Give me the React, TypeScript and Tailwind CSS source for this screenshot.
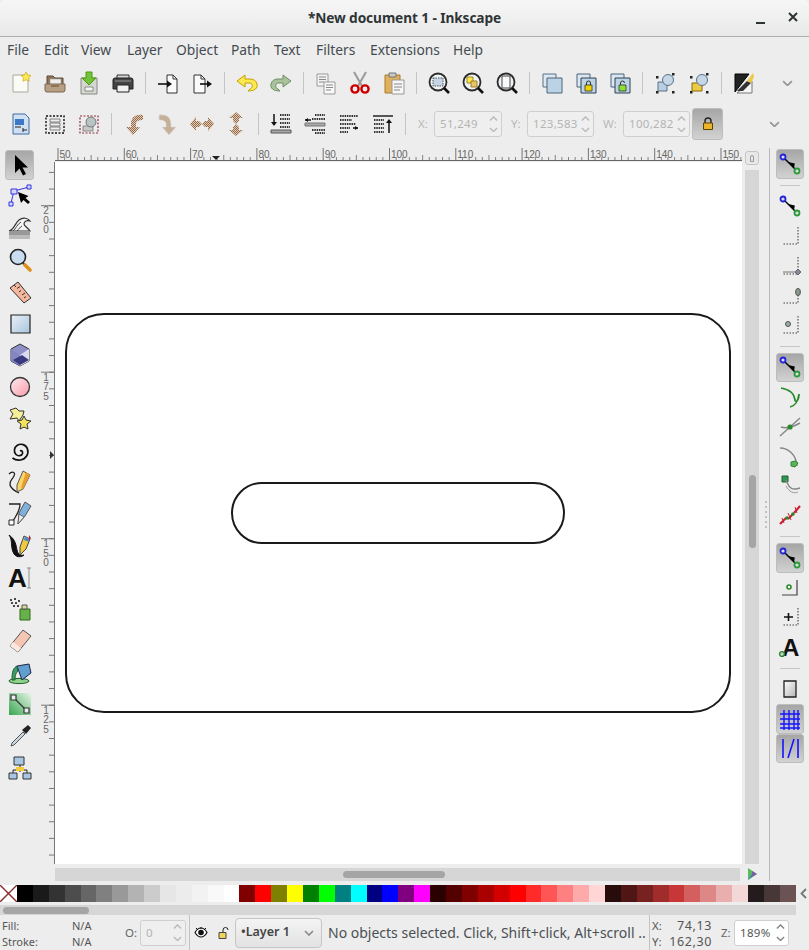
import React from "react";

const Ico = ({ children }: { children: React.ReactNode }) => (
  <svg width="24" height="24" viewBox="0 0 24 24" fill="none" className="shrink-0 overflow-visible">
    {children}
  </svg>
);

const Chevron = ({ up = false, size = 10, color = "#9a9a9a" }: { up?: boolean; size?: number; color?: string }) => (
  <svg width={size} height={size * 0.6} viewBox="0 0 10 6" fill="none">
    <path d={up ? "M1 5l4-4 4 4" : "M1 1l4 4 4-4"} stroke={color} strokeWidth="1.6" />
  </svg>
);

// top toolbar
const iNew = (
  <Ico>
    <path d="M4 4h15v17H4z" fill="#fbfbf6" stroke="#a9a9a0" />
    <path d="M17 1l1.600 3 3.400.5-2.400 2.400.6 3.400-3.200-1.600-3 1.600.5-3.400L12 4.500l3.400-.5z" fill="#fce94f" stroke="#c4a000" strokeWidth=".6" />
  </Ico>
);
const iOpen = (
  <Ico>
    <path d="M4 5h6l2 2h8v7H4z" fill="#8f7458" stroke="#5c4a35" />
    <path d="M7 8h11v6H7z" fill="#eeeeec" stroke="#999" strokeWidth=".6" />
    <path d="M2 13h20v6a2 2 0 01-2 2H4a2 2 0 01-2-2z" fill="#b79f84" stroke="#7b6750" />
    <path d="M8 14h8v2H8z" fill="#8f7458" />
  </Ico>
);
const iSave = (
  <Ico>
    <path d="M4 7h16v16H4z" fill="#d3d7cf" stroke="#888a85" />
    <path d="M8 16h8v4H8z" fill="#f4f4f2" stroke="#666" strokeWidth=".7" />
    <path d="M9 1h6v6h4l-7 7-7-7h4z" fill="#73c23f" stroke="#4e9a06" />
  </Ico>
);
const iPrint = (
  <Ico>
    <path d="M6 4h12v5H6z" fill="#d5d5d5" stroke="#333" />
    <path d="M2 9a2 2 0 012-2h16a2 2 0 012 2v9H2z" fill="#444" stroke="#222" />
    <path d="M6 14h12v7H6z" fill="#f2f2f2" stroke="#222" />
    <path d="M4 10h16" stroke="#999" />
  </Ico>
);
const iImport = (
  <Ico>
    <path d="M11 4h6l4 4v14H11z" fill="#fafafa" stroke="#333" />
    <path d="M17 4v4h4" stroke="#333" />
    <path d="M2 13h10" stroke="#111" strokeWidth="1.600" />
    <path d="M11 9.500l5 3.500-5 3.500z" fill="#111" />
  </Ico>
);
const iExport = (
  <Ico>
    <path d="M4 4h7l4 4v14H4z" fill="#fafafa" stroke="#333" />
    <path d="M11 4v4h4" stroke="#333" />
    <path d="M10 13h8" stroke="#111" strokeWidth="1.600" />
    <path d="M17 9.500l5 3.500-5 3.500z" fill="#111" />
  </Ico>
);
const iUndo = (
  <Ico>
    <path d="M10 4L2 10l8 6v-4h5c3 0 3 5 0 6l-2 2c7 0 10-3 9-7-.6-3-3-5-7-5h-5z" fill="#fce94f" stroke="#c4a000" />
  </Ico>
);
const iRedo = (
  <Ico>
    <path d="M14 4l8 6-8 6v-4H9c-3 0-3 5 0 6l2 2c-7 0-10-3-9-7 .6-3 3-5 7-5h5z" fill="#a9c29b" stroke="#6f8f62" />
  </Ico>
);
const iCopy = (
  <Ico>
    <path d="M3 3h11v12H3z" fill="#f3f3f3" stroke="#9a9a9a" />
    <path d="M5 6h7M5 8.500h7M5 11h5" stroke="#888" />
    <path d="M10 11h11v12H10z" fill="#f8f8f8" stroke="#9a9a9a" />
    <path d="M12 14h7M12 16.500h7M12 19h5" stroke="#888" />
  </Ico>
);
const iCut = (
  <Ico>
    <path d="M6 1l8 14M18 1l-8 14" stroke="#9a9a9a" strokeWidth="2" />
    <circle cx="7" cy="18" r="3.600" stroke="#cc0000" strokeWidth="2.400" />
    <circle cx="17" cy="18" r="3.600" stroke="#cc0000" strokeWidth="2.400" />
  </Ico>
);
const iPaste = (
  <Ico>
    <path d="M3 4h15v18H3z" fill="#dfb05e" stroke="#a67c2d" />
    <path d="M7 2h7v4H7z" fill="#c9c9c9" stroke="#777" />
    <path d="M10 9h12v14H10z" fill="#f6f6f6" stroke="#999" />
    <path d="M12 13h8M12 16h8M12 19h6" stroke="#888" />
  </Ico>
);
const Lens = ({ children }: { children?: React.ReactNode }) => (
  <Ico>
    <circle cx="11" cy="11" r="8.500" fill="#eef3f7" stroke="#2b2b2b" strokeWidth="1.800" />
    {children}
    <path d="M17 17l5 5" stroke="#111" strokeWidth="2.600" />
  </Ico>
);
const iZoomDraw = (
  <Lens>
    <path d="M6 7h10v8H6z" fill="#c5d5e6" stroke="#555" strokeDasharray="1.500 1" />
  </Lens>
);
const iZoomSel = (
  <Lens>
    <path d="M6 6h6v6H6z" fill="#fce94f" stroke="#8a6d00" strokeWidth=".8" />
    <path d="M10 10h6v6h-6z" fill="#e9c46a" stroke="#8a6d00" strokeWidth=".8" />
  </Lens>
);
const iZoomPage = (
  <Lens>
    <path d="M7 5h8v12H7z" fill="#fafafa" stroke="#444" />
  </Lens>
);
const iDup = (
  <Ico>
    <path d="M3 3h13v13H3z" fill="#dbe7f1" stroke="#5a7186" />
    <path d="M7 7h15v15H7z" fill="#bcd3e6" stroke="#4d6579" />
  </Ico>
);
const iClone = (
  <Ico>
    <path d="M3 3h13v13H3z" fill="#dbe7f1" stroke="#4d6579" />
    <path d="M7 7h15v15H7z" fill="#bcd3e6" stroke="#2f4050" />
    <path d="M11 14h7v6h-7z" fill="#edd400" stroke="#333" strokeWidth=".8" />
    <path d="M12.500 14v-2a2 2 0 014 0v2" stroke="#333" />
  </Ico>
);
const iUnlink = (
  <Ico>
    <path d="M3 3h13v13H3z" fill="#dbe7f1" stroke="#4d6579" />
    <path d="M7 7h15v15H7z" fill="#bcd3e6" stroke="#2f4050" />
    <path d="M11 14h7v6h-7z" fill="#8ae234" stroke="#333" strokeWidth=".8" />
    <path d="M12.500 14v-2a2 2 0 014 0" stroke="#333" />
  </Ico>
);
const Corners = () => (
  <path d="M3 5h2.500v2.500H3zM19 2h2.500v2.500H19zM3 20h2.500v2.500H3zM19 20h2.500v2.500H19z" fill="#222" />
);
const iGroup = (
  <Ico>
    <Corners />
    <path d="M5 11h9v9H5z" fill="#b7cfe3" stroke="#5a7186" />
    <circle cx="15" cy="9" r="5.500" fill="#c5d7e6" stroke="#5a7186" />
  </Ico>
);
const iUngroup = (
  <Ico>
    <Corners />
    <path d="M5 12h10v8H5z" fill="#edc948" stroke="#8a6d00" />
    <circle cx="15" cy="9" r="5.500" fill="#c5d7e6" stroke="#5a7186" />
  </Ico>
);
const iFillStroke = (
  <Ico>
    <path d="M3 3h14L3 21z" fill="#222" stroke="#000" />
    <path d="M20 10v12H5z" fill="#f5f5f5" stroke="#777" />
    <path d="M5 20l10-10 4 2-8 8z" fill="#333" />
    <path d="M15 10l6-8 1 4-3 6z" fill="#edc948" />
  </Ico>
);

// second toolbar
const iDoc = (
  <Ico>
    <path d="M4 2h12l4 4v16H4z" fill="#cfe0f3" stroke="#3f6aa3" />
    <path d="M6 7h9v6H6z" fill="#3c78c8" />
    <path d="M6 15h6M14 18h4M14 16v4" stroke="#222" />
  </Ico>
);
const iSelAll = (
  <Ico>
    <path d="M3 4h18v17H3z" stroke="#111" strokeDasharray="2 1.500" strokeWidth="1.400" />
    <path d="M7 7h10v3H7zM7 11h10v3H7zM7 15h10v3H7z" fill="#eee" stroke="#666" strokeWidth=".8" />
  </Ico>
);
const iSelLayers = (
  <Ico>
    <path d="M3 4h18v17H3z" stroke="#8f2f3f" strokeDasharray="2 1.500" strokeWidth="1.200" />
    <path d="M6 14h10v5H6z" fill="#c9c9c9" stroke="#777" strokeWidth=".8" />
    <circle cx="14" cy="10" r="5" fill="#b8c4c4" stroke="#777" />
  </Ico>
);
const Dither = "url(#dz)";
const iRotL = (
  <Ico>
    <defs>
      <pattern id="dz" width="2" height="2" patternUnits="userSpaceOnUse">
        <rect width="2" height="2" fill="#e6c9ae" />
        <rect width="1" height="1" fill="#8e6c52" />
        <rect x="1" y="1" width="1" height="1" fill="#8e6c52" />
      </pattern>
    </defs>
    <path d="M21 3c-7-1-12 2-12 9v3H4l7 8 7-8h-4v-3c0-3 3-4 7-4z" fill={Dither} />
  </Ico>
);
const iRotR = (
  <Ico>
    <path d="M3 3c7-1 12 2 12 9v3h5l-7 8-7-8h4v-3c0-3-3-4-7-4z" fill="#c7b09a" stroke="#ddd" strokeWidth=".6" />
  </Ico>
);
const iFlipH = (
  <Ico>
    <path d="M0 12l6-7v4h3l3 3-3 3H6v4zM24 12l-6-7v4h-3l-3 3 3 3h3v4z" fill={Dither} />
  </Ico>
);
const iFlipV = (
  <Ico>
    <path d="M12 0L5 6h4v3l3 3-3 3v3H5l7 6 7-6h-4v-3l-3-3 3-3V6h4z" fill={Dither} />
  </Ico>
);
const Lines = ({ d }: { d: string }) => <path d={d} stroke="#333" strokeWidth="2" strokeDasharray="1.500 .8" />;
const iAlignTop = (
  <Ico>
    <path d="M5 2v10" stroke="#111" strokeWidth="1.500" />
    <path d="M2 10l3 4 3-4z" fill="#111" />
    <Lines d="M11 3h10M11 7h10M11 11h10M11 15h10" />
    <path d="M2 18h20v3H2z" fill="#aaa" stroke="#555" />
  </Ico>
);
const iAlignUp = (
  <Ico>
    <path d="M2 8h6" stroke="#111" strokeWidth="1.500" />
    <path d="M2 8l3-2v4z" fill="#111" />
    <Lines d="M12 3h10M9 7h13" />
    <path d="M2 11h20v3H2z" fill="#aaa" stroke="#777" />
    <Lines d="M9 18h13M12 21h10" />
  </Ico>
);
const iAlignDown = (
  <Ico>
    <Lines d="M3 4h18M3 8h12M3 12h16M3 16h10M3 20h8" />
    <path d="M16 16h5" stroke="#111" strokeWidth="1.500" />
    <path d="M21 16l-3-2v4z" fill="#111" />
  </Ico>
);
const iAlignBottom = (
  <Ico>
    <path d="M2 3h20v2H2z" fill="#555" />
    <Lines d="M3 8h10M3 12h10M3 16h10M3 20h10" />
    <path d="M18 21v-11" stroke="#111" strokeWidth="1.500" />
    <path d="M15 11l3-4 3 4z" fill="#111" />
  </Ico>
);

// left tools
const tArrow = (
  <Ico>
    <path d="M7 2v18l4.500-4.500 3.500 7 3-1.500-3.500-6.500H20z" fill="#000" />
  </Ico>
);
const tNode = (
  <Ico>
    <path d="M6 6l15-4M6 6L3 18" stroke="#3333dd" />
    <path d="M3 4h6v5H3zM19 0h4v4h-4zM1 17h4v4H1z" fill="#d6d6ff" stroke="#3333dd" />
    <path d="M10 7l3 11 2.500-3 4.500 4 2-2-4.500-4 3-2z" fill="#000" />
  </Ico>
);
const tTweak = (
  <Ico>
    <path d="M1 15c5-1 6-8 10-11 4-3 9-2 11 1-3-1-6 0-6 3 0 2 3 3 6 7z" fill="#f4f4f4" stroke="#333" strokeWidth="1.200" />
    <path d="M5 15c3-2 4-7 8-9M9 15c2-2 3-4 5-5" stroke="#444" />
    <path d="M1 15h21v8H1z" fill="#999" />
    <path d="M1 19h21v4H1z" fill="#bbb" />
  </Ico>
);
const tZoom = (
  <Ico>
    <circle cx="10" cy="9" r="7.500" fill="#c9dcf0" stroke="#222" strokeWidth="1.600" />
    <path d="M15 15l2 2" stroke="#222" strokeWidth="2" />
    <path d="M17 17l5 5" stroke="#e08f1b" strokeWidth="3.600" strokeLinecap="round" />
  </Ico>
);
const tMeasure = (
  <Ico>
    <path d="M2 8l8-6 13 16-7 5z" fill="#f3b79d" stroke="#333" />
    <path d="M6 5l2 2M9 8.500l3-2M11 12l2-1.500M14 15l3-2M16 18l2-1.500" stroke="#333" />
  </Ico>
);
const tRect = (
  <Ico>
    <defs>
      <linearGradient id="rg" x1="0" y1="0" x2="1" y2="1">
        <stop offset="0" stopColor="#e8f0f6" />
        <stop offset="1" stopColor="#a9c5de" />
      </linearGradient>
    </defs>
    <path d="M3 3h19v18H3z" fill="url(#rg)" stroke="#222" strokeWidth="1.200" />
  </Ico>
);
const t3d = (
  <Ico>
    <path d="M12 1l9 5v12l-9 5-9-5V6z" fill="#8f90c8" stroke="#333" />
    <path d="M12 12l9-6v12l-9 5z" fill="#dcdcf0" />
    <path d="M12 12v11l-9-5V6z" fill="#8586c0" />
    <path d="M5 17l9-5 7 5-9 5z" fill="#3a3a80" />
  </Ico>
);
const tCircle = (
  <Ico>
    <defs>
      <linearGradient id="cg" x1="0" y1="0" x2="1" y2="1">
        <stop offset="0" stopColor="#fdecef" />
        <stop offset="1" stopColor="#f79aa7" />
      </linearGradient>
    </defs>
    <circle cx="12" cy="12" r="9.500" fill="url(#cg)" stroke="#333" strokeWidth="1.300" />
  </Ico>
);
const tStar = (
  <Ico>
    <path d="M8 1l3 3 5 0-1 4-4 6-2-3-7 1 3-5-3-4z" fill="#f6ef9a" stroke="#333" />
    <path d="M16 9l2 4 5 1-4 3 1 5-4-2-4 2 1-5-4-3 5-1z" fill="#f3e35b" stroke="#333" />
  </Ico>
);
const tSpiral = (
  <Ico>
    <path d="M12 12c1.500-1 3 .5 2.500 2.500-.7 2.500-4.500 3-6.500 1-2.500-2.500-2-7 1-9 4-2.500 9-1 10.500 3.500 1.500 5-1.500 10-7 11-3 .5-6-.5-8-2" stroke="#111" strokeWidth="1.700" />
  </Ico>
);
const tPencil = (
  <Ico>
    <path d="M1 4c3-3 7-2 5 2s-5 5-4 9 5 6 9 8" stroke="#222" strokeWidth="1.300" />
    <path d="M15 1l7 4-7 14-6 3 0-7z" fill="#f9d66b" stroke="#555" />
    <path d="M18 2l4 3-7 14-2-1z" fill="#ec9a2b" />
  </Ico>
);
const tPen = (
  <Ico>
    <path d="M1 2h11c0 8-5 13-7 17" stroke="#222" strokeWidth="1.300" />
    <path d="M1 18h5v5H1z" fill="#fff" stroke="#222" />
    <path d="M17 0l6 4-6 10-7 8 1-11z" fill="#7fb1dc" stroke="#555" />
    <path d="M11 12l5 3-6 7z" fill="#e8e8e8" stroke="#444" strokeWidth=".7" />
  </Ico>
);
const tCalli = (
  <Ico>
    <path d="M1 1c4 5 1 12 5 19 3 4 8 3 10 1-4 1-6-1-7-5S8 6 1 1z" fill="#111" stroke="#111" />
    <path d="M16 2l6 3-4 10-6 6 0-8z" fill="#f0c93e" stroke="#444" />
    <path d="M17 2l5 3-1 3-5-2z" fill="#4e89c8" />
    <path d="M21 1l2 3-2 3z" fill="#c01c28" />
  </Ico>
);
const tText = (
  <Ico>
    <text x="0" y="21" fontFamily="Liberation Sans, sans-serif" fontWeight="700" fontSize="26" fill="#111">
      A
    </text>
    <path d="M21 2v20M19 2h4M19 22h4" stroke="#777" strokeWidth=".8" />
  </Ico>
);
const tSpray = (
  <Ico>
    <path d="M12 12h10v11H12z" fill="#67b04a" stroke="#2e6a1b" />
    <path d="M14 8h5v4h-5z" fill="#d8d89a" stroke="#555" />
    <path d="M2 3h2M6 2h2M3 6h2M7 6h2M10 4h2M5 9h2M9 9h2" stroke="#111" strokeWidth="1.600" />
  </Ico>
);
const tEraser = (
  <Ico>
    <path d="M15 1l8 6-13 16-8-6z" fill="#f5c6b4" stroke="#555" />
    <path d="M2 17l8 6 3-4-8-6z" fill="#fbe9e0" />
  </Ico>
);
const tBucket = (
  <Ico>
    <ellipse cx="11" cy="20" rx="10" ry="2.600" fill="#8fd08a" stroke="#1f5e2e" />
    <path d="M9 5l12-2 2 9-9 7z" fill="#5f9fd0" stroke="#224" />
    <path d="M9 5c-4 2-5 6-5 14h3c0-5 1-7 3-9z" fill="#3d9a6a" stroke="#1f5e2e" />
  </Ico>
);
const tGrad = (
  <Ico>
    <defs>
      <linearGradient id="gg" x1="0" y1="1" x2="1" y2="0">
        <stop offset="0" stopColor="#36a64f" />
        <stop offset="1" stopColor="#e6f4e6" />
      </linearGradient>
    </defs>
    <path d="M1 1h22v22H1z" fill="url(#gg)" />
    <path d="M6 6l12 12" stroke="#333" strokeWidth="1.300" />
    <path d="M3 3h5v5H3zM16 16h5v5h-5z" fill="#eee" stroke="#333" strokeWidth="1.200" />
  </Ico>
);
const tDropper = (
  <Ico>
    <path d="M15 8l-11 11-1 3 3-1L17 10z" fill="#c9d6df" stroke="#555" />
    <path d="M14 6l4 4 5-6-3-3z" fill="#222" />
  </Ico>
);
const tConn = (
  <Ico>
    <path d="M12 8v8M5 17v-3h14v3" stroke="#222" />
    <path d="M6 1h10v8H6z" fill="#a9c7e3" stroke="#333" />
    <path d="M8 11h8v4H8z" fill="#f2cc3a" />
    <path d="M1 17h8v6H1zM15 17h8v6h-8z" fill="#a9c7e3" stroke="#333" />
  </Ico>
);

// right snap bar
const sMain = (
  <Ico>
    <path d="M6 6l11 11" stroke="#000" strokeWidth="1.400" />
    <path d="M10 10l6 6 .8-4.500z" fill="#000" />
    <circle cx="5" cy="5" r="2.500" fill="#ddd" stroke="#2222dd" strokeWidth="1.800" />
    <circle cx="19" cy="19" r="2.500" fill="#ddd" stroke="#2a9a3a" strokeWidth="1.800" />
  </Ico>
);
const Bracket = () => <path d="M20 3v17H4" stroke="#444" strokeDasharray="1.500 1.500" strokeWidth="1.100" />;
const sBox = <Ico><Bracket /></Ico>;
const sEdge = (
  <Ico>
    <Bracket />
    <path d="M20 15l3 3-3 3-3-3zM5 18h12" fill="#889" stroke="#555" strokeWidth=".8" />
  </Ico>
);
const sMid = (
  <Ico>
    <path d="M20 12v8H4" stroke="#444" strokeDasharray="1.500 1.500" strokeWidth="1.100" />
    <ellipse cx="20" cy="9" rx="2.400" ry="3.600" fill="#8a9a8a" stroke="#555" />
  </Ico>
);
const sCenter = (
  <Ico>
    <Bracket />
    <circle cx="10" cy="11" r="2.500" fill="#9aa" stroke="#555" />
  </Ico>
);
const sPath = <Ico><path d="M3 3c6 1 13 4 14 12 .5 3 4 1 4-6-1 8-4 12-9 13" stroke="#2a8a2a" strokeWidth="1.700" /></Ico>;
const sInter = (
  <Ico>
    <path d="M2 21L22 3" stroke="#888" strokeWidth="1.500" />
    <path d="M3 12c6 2 12 0 19-4" stroke="#888" strokeWidth="1.500" />
    <circle cx="12" cy="12" r="2.600" fill="#2a8a2a" />
  </Ico>
);
const sCusp = (
  <Ico>
    <path d="M2 4c8 0 16 6 17 18" stroke="#888" strokeWidth="1.500" />
    <path d="M13 18l4-1 3 2-3 4-4-1z" fill="#5fb05f" stroke="#2a8a2a" />
  </Ico>
);
const sSmooth = (
  <Ico>
    <path d="M4 2h6v6H4z" fill="#2a9a5a" stroke="#2a5a2a" />
    <path d="M8 6c3 8 6 11 14 8" stroke="#888" strokeWidth="1.500" />
    <path d="M8 12c3 6 8 8 12 6" stroke="#999" />
  </Ico>
);
const sLine = (
  <Ico>
    <path d="M2 21l6-6M10 16l5-5M16 10l6-7" stroke="#cc2233" strokeWidth="2.200" />
    <path d="M4 15l2 5M10 10l3 7M17 4l2 6" stroke="#cc2233" />
    <circle cx="9" cy="15" r="1.800" fill="#2a8a2a" />
    <circle cx="15" cy="11" r="1.800" fill="#2a8a2a" />
  </Ico>
);
const sSmall = (
  <Ico>
    <path d="M19 4v15H4" stroke="#444" strokeWidth="1.200" />
    <circle cx="11" cy="11" r="2" fill="#fff" stroke="#2a8a2a" strokeWidth="1.600" />
  </Ico>
);
const sCross = (
  <Ico>
    <Bracket />
    <path d="M6 12h9M10.500 8v8" stroke="#111" strokeWidth="1.600" />
  </Ico>
);
const sTextIco = (
  <Ico>
    <text x="4" y="21" fontFamily="Liberation Sans, sans-serif" fontWeight="700" fontSize="24" fill="#111">
      A
    </text>
    <circle cx="4" cy="19" r="2.400" fill="#ccc" stroke="#2a8a2a" strokeWidth="1.400" />
  </Ico>
);
const sPage = (
  <Ico>
    <defs>
      <linearGradient id="pg" x1="0" y1="0" x2="1" y2="1">
        <stop offset="0" stopColor="#ffffff" />
        <stop offset="1" stopColor="#b5b5b5" />
      </linearGradient>
    </defs>
    <path d="M6 4h12v16H6z" fill="url(#pg)" stroke="#222" strokeWidth="1.300" />
  </Ico>
);
const sGrid = (
  <Ico>
    <path d="M2 7h20M2 12h20M2 17h20M2 21h20M6 3v20M11 3v20M16 3v20M20 3v20" stroke="#1414ff" strokeWidth="1.400" />
  </Ico>
);
const sGuide = (
  <Ico>
    <path d="M5 3v19M20 3v19M10 22L16 3" stroke="#1414ff" strokeWidth="1.600" />
  </Ico>
);

const Sep = () => (
  <div className="flex w-[11px] h-full items-center justify-center">
    <div className="w-px h-[22px] bg-[#c4c4c4]" />
  </div>
);

const Btn = ({ icon, w = "w-[34px]" }: { icon: React.ReactNode; w?: string }) => (
  <div className={`${w} flex items-center justify-center`}>{icon}</div>
);

const Spin = ({ value, className, dim = true }: { value: string; className: string; dim?: boolean }) => (
  <div
    className={`${className} h-[26px] flex items-center justify-between pl-[5px] pr-[2px] rounded-[3px] border border-[#cfcfcf] ${
      dim ? "bg-[#efefef] text-[#b4b4b4]" : "bg-white text-[#555]"
    }`}
  >
    <span className="text-[11.5px] tracking-[0.3px] leading-none">{value}</span>
    <div className="flex flex-col items-center gap-[6px] w-[12px]">
      <Chevron up size={9} color={dim ? "#bbbbbb" : "#888"} />
      <Chevron size={9} color={dim ? "#bbbbbb" : "#888"} />
    </div>
  </div>
);

const activeBg = "bg-gradient-to-b from-[#a6a6a6] to-[#d2d2d2] border border-[#bdbdbd] rounded-[3px]";

const HRuler = () => {
  const ticks: React.ReactNode[] = [];
  for (let i = 0; i <= 103; i++) {
    const x = 3 + i * 6.63;
    const major = i % 10 === 0;
    const h = major ? 12 : i % 5 === 0 ? 5 : 3;
    ticks.push(<path key={i} d={`M${x} ${12 - h}V12`} stroke={major ? "#666" : "#777"} strokeWidth="0.9" />);
    if (major)
      ticks.push(
        <text key={`t${i}`} x={x + 1.5} y={9.5} fontSize="10" fill="#666" fontFamily="Liberation Sans, sans-serif">
          {50 + i}
        </text>
      );
  }
  return (
    <svg width="687" height="14" className="block">
      {ticks}
      <path d="M0 12.500H687" stroke="#666" />
      <path d="M157 8h8l-4 4z" fill="#222" />
    </svg>
  );
};

const VRuler = () => {
  const items: React.ReactNode[] = [];
  for (let i = 0; i < 43; i++) {
    const y = 10.4 + i * 16.65;
    items.push(<path key={i} d={`M9 ${y}H15`} stroke="#777" />);
  }
  ["200", "175", "150", "125"].forEach((label, k) => {
    const y = 43.7 + k * 166.5;
    items.push(<path key={`m${k}`} d={`M1 ${y}H15`} stroke="#777" />);
    label.split("").forEach((c, j) =>
      items.push(
        <text key={`${k}-${j}`} x={6} y={y + 8.5 + j * 9.6} fontSize="10" textAnchor="middle" fill="#666" fontFamily="Liberation Sans, sans-serif">
          {c}
        </text>
      )
    );
  });
  return (
    <svg width="15" height="702" className="block">
      {items}
      <path d="M14.500 0V702" stroke="#777" />
      <path d="M10 289l4 4-4 4z" fill="#333" />
    </svg>
  );
};

const leftTools = [tArrow, tNode, tTweak, tZoom, tMeasure, tRect, t3d, tCircle, tStar, tSpiral, tPencil, tPen, tCalli, tText, tSpray, tEraser, tBucket, tGrad, tDropper, tConn];

const rightBar: ({ i: React.ReactNode; on?: boolean } | null)[] = [
  { i: sMain, on: true },
  null,
  { i: sMain },
  { i: sBox },
  { i: sEdge },
  { i: sMid },
  { i: sCenter },
  null,
  { i: sMain, on: true },
  { i: sPath },
  { i: sInter },
  { i: sCusp },
  { i: sSmooth },
  { i: sLine },
  null,
  { i: sMain, on: true },
  { i: sSmall },
  { i: sCross },
  { i: sTextIco },
  null,
  { i: sPage },
  { i: sGrid, on: true },
  { i: sGuide, on: true },
];

const palette = [
  "#000000", "#1a1a1a", "#333333", "#4d4d4d", "#666666", "#808080", "#999999", "#b3b3b3", "#cccccc", "#e6e6e6", "#ececec", "#f2f2f2", "#f9f9f9", "#ffffff",
  "#800000", "#ff0000", "#808000", "#ffff00", "#008000", "#00ff00", "#008080", "#00ffff", "#000080", "#0000ff", "#800080", "#ff00ff",
  "#2b0000", "#550000", "#800000", "#aa0000", "#d40000", "#ff0000", "#ff2a2a", "#ff5555", "#ff8080", "#ffaaaa", "#ffd5d5",
  "#280b0b", "#501616", "#782121", "#a02c2c", "#c83737", "#d35f5f", "#de8787", "#e9afaf", "#f4d7d7",
  "#241c1c", "#483737", "#6c5353",
];

const menus = [
  ["File", "w-[37px]"],
  ["Edit", "w-[37px]"],
  ["View", "w-[46px]"],
  ["Layer", "w-[49px]"],
  ["Object", "w-[55px]"],
  ["Path", "w-[43px]"],
  ["Text", "w-[42px]"],
  ["Filters", "w-[54px]"],
  ["Extensions", "w-[83px]"],
  ["Help", "w-[40px]"],
];

export default function App() {
  return (
    <div className="w-[809px] h-[950px] flex flex-col overflow-hidden bg-[#ededed] text-[#444b50] font-['Noto_Sans',sans-serif]">
      {/* title bar */}
      <div className="h-[36px] shrink-0 flex items-center relative justify-center rounded-t-[5px] bg-gradient-to-b from-[#f6f6f6] to-[#e9e9e9]">
        <span className="text-[13.7px] font-bold text-[#2e3436] tracking-[-0.1px]">*New document 1 - Inkscape</span>
        <div className="absolute right-[11px] top-[10px] flex items-center gap-[23px]">
          <div className="w-[9px] h-[2px] bg-[#2e3436] mt-[12px]" />
          <svg width="10" height="10" viewBox="0 0 10 10">
            <path d="M1 1l8 8M9 1l-8 8" stroke="#2e3436" strokeWidth="2" />
          </svg>
        </div>
      </div>
      <div className="h-px shrink-0 bg-[#aeaeae]" />

      {/* menu */}
      <div className="h-[26px] shrink-0 flex items-center pl-[7px] text-[13.8px]">
        {menus.map(([m, w]) => (
          <span key={m} className={w}>
            {m}
          </span>
        ))}
      </div>

      {/* toolbar 1 */}
      <div className="h-[40px] shrink-0 flex items-center pl-[4px]">
        <Btn icon={iNew} />
        <Btn icon={iOpen} />
        <Btn icon={iSave} />
        <Btn icon={iPrint} />
        <Sep />
        <Btn icon={iImport} />
        <Btn icon={iExport} />
        <Sep />
        <Btn icon={iUndo} />
        <Btn icon={iRedo} />
        <Sep />
        <Btn icon={iCopy} />
        <Btn icon={iCut} />
        <Btn icon={iPaste} />
        <Sep />
        <Btn icon={iZoomDraw} />
        <Btn icon={iZoomSel} />
        <Btn icon={iZoomPage} />
        <Sep />
        <Btn icon={iDup} />
        <Btn icon={iClone} />
        <Btn icon={iUnlink} />
        <Sep />
        <Btn icon={iGroup} />
        <Btn icon={iUngroup} />
        <Sep />
        <Btn icon={iFillStroke} />
        <div className="ml-[21px]">
          <Chevron size={11} color="#999" />
        </div>
      </div>

      {/* toolbar 2 */}
      <div className="h-[42px] shrink-0 flex items-center pl-[4px]">
        <Btn icon={iDoc} />
        <Btn icon={iSelAll} />
        <Btn icon={iSelLayers} />
        <Sep />
        <Btn icon={iRotL} />
        <Btn icon={iRotR} />
        <Btn icon={iFlipH} />
        <Btn icon={iFlipV} />
        <Sep />
        <Btn icon={iAlignTop} />
        <Btn icon={iAlignUp} />
        <Btn icon={iAlignDown} />
        <Btn icon={iAlignBottom} />
        <Sep />
        <span className="w-[23px] pl-[7px] text-[11.5px] text-[#b8b8b8]">X:</span>
        <Spin value="51,249" className="w-[68px]" />
        <span className="w-[25px] pl-[9px] text-[11.5px] text-[#b8b8b8]">Y:</span>
        <Spin value="123,583" className="w-[67px]" />
        <span className="w-[29px] pl-[9px] text-[11.5px] text-[#b8b8b8]">W:</span>
        <Spin value="100,282" className="w-[67px]" />
        <div className={`ml-[2px] w-[31px] h-[32px] flex items-center justify-center ${activeBg}`}>
          <svg width="14" height="14" viewBox="0 0 14 14" fill="none">
            <path d="M4 6V4a3 3 0 016 0v2" stroke="#222" strokeWidth="1.400" />
            <path d="M2.500 6h9v6.500h-9z" fill="#edb52c" stroke="#5c4300" />
          </svg>
        </div>
        <div className="ml-[46px]">
          <Chevron size={11} color="#999" />
        </div>
      </div>

      {/* main */}
      <div className="mt-[3px] h-[733px] shrink-0 flex">
        <div className="w-[40px] shrink-0 flex flex-col pt-[2px] pl-[5px]">
          {leftTools.map((t, i) => (
            <div
              key={i}
              className={`w-[29px] h-[30px] mb-[1.740px] flex items-center justify-center ${i === 0 ? activeBg : ""}`}
            >
              {t}
            </div>
          ))}
        </div>

        <div className="w-[719px] shrink-0 grid grid-cols-[15px_687px_17px] grid-rows-[14px_702px_17px]">
          <div />
          <HRuler />
          <div className="row-span-2 flex flex-col pl-[3px] pt-[3px]">
            <div className="w-[14px] h-[14px] rounded-[3px] border border-[#c4c4c4] bg-[#e8e8e8] flex items-center justify-center">
              <div className="w-[4px] h-[7px] border border-[#999] rounded-t-[2px]" />
            </div>
            <div className="mt-[5px] w-[14px] flex-1 bg-[#d6d6d6] pt-[305px]">
              <div className="mx-auto w-[7px] h-[73px] rounded-[4px] bg-[#a5a5a5]" />
            </div>
          </div>
          <VRuler />
          <div className="bg-white overflow-hidden">
            <svg width="687" height="702" className="block" fill="none">
              <rect x="11" y="152" width="664" height="398" rx="38" stroke="#1a1a1a" strokeWidth="2" />
              <rect x="177" y="321" width="332" height="60" rx="30" stroke="#1a1a1a" strokeWidth="2" />
            </svg>
          </div>
          <div />
          <div className="mt-[4px] h-[13px] w-[685px] bg-[#d6d6d6] flex items-center pl-[288px]">
            <div className="w-[102px] h-[7px] rounded-[4px] bg-[#a5a5a5]" />
          </div>
          <div className="flex items-end justify-center pl-[3px]">
            <svg width="12" height="14" viewBox="0 0 12 14">
              <path d="M2 1l9 6-9 6z" fill="#5cb85c" />
              <path d="M6 4l5 3-5 3z" fill="#7a5ca8" />
              <path d="M2 13l4-6v3z" fill="#3a7ac8" />
            </svg>
          </div>
        </div>

        <div className="w-[10px] shrink-0 flex flex-col items-start justify-center pl-[6px] gap-[3px]">
          {[0, 1, 2, 3, 4, 5].map((d) => (
            <div key={d} className="w-[2px] h-[2px] bg-[#c0c0c0]" />
          ))}
        </div>

        <div className="w-[40px] shrink-0 border-l border-[#b8b8b8] pl-[6px] pt-px">
          {rightBar.map((b, i) =>
            b ? (
              <div key={i} className={`w-[28px] h-[29.600px] flex items-center justify-center ${b.on ? activeBg : ""}`}>
                {b.i}
              </div>
            ) : (
              <div key={i} className="w-[28px] h-[13px] flex items-center justify-center">
                <div className="w-[20px] h-px bg-[#c6c6c6]" />
              </div>
            )
          )}
        </div>
      </div>

      {/* palette */}
      <div className="mt-[4px] h-[17px] shrink-0 flex">
        <svg width="17" height="17" viewBox="0 0 17 17" className="shrink-0 bg-white">
          <path d="M0 0l17 17M17 0L0 17" stroke="#8c2a2a" strokeWidth="1.400" />
        </svg>
        {palette.map((c, i) => (
          <div key={i} className="w-[15.900px] h-full shrink-0" style={{ background: c }} />
        ))}
        <div className="ml-[4px] flex items-center">
          <svg width="7" height="11" viewBox="0 0 7 11">
            <path d="M6 1L1.500 5.500 6 10" stroke="#777" strokeWidth="1.800" fill="none" />
          </svg>
        </div>
      </div>

      {/* palette scroll */}
      <div className="mt-[3px] h-[10px] w-[796px] shrink-0 bg-[#d6d6d6] flex items-center pl-[3px]">
        <div className="w-[86px] h-[7px] rounded-[4px] bg-[#a5a5a5]" />
      </div>

      {/* status bar */}
      <div className="h-[35px] shrink-0 flex items-center">
        <div className="w-[125px] pl-[2px] grid grid-cols-[70px_auto] text-[11px] leading-[16px] text-[#555] pt-[2px]">
          <span>Fill:</span>
          <span>N/A</span>
          <span>Stroke:</span>
          <span>N/A</span>
        </div>
        <span className="w-[15px] text-[11.5px] text-[#666]">O:</span>
        <Spin value="0" className="w-[46px]" />
        <div className="ml-[3px] w-px h-full bg-[#c2c2c2]" />
        <div className="w-[22px] flex justify-center">
          <svg width="14" height="11" viewBox="0 0 14 11" fill="none">
            <path d="M1 5.500C3 2 5 1 7 1s4 1 6 4.500C11 9 9 10 7 10S3 9 1 5.500z" fill="#fff" stroke="#111" strokeWidth="1.200" />
            <circle cx="7" cy="5.500" r="2.800" fill="#111" />
            <path d="M2 1l2 2M7 0v2M12 1l-2 2" stroke="#111" />
          </svg>
        </div>
        <div className="w-[22px] flex justify-center">
          <svg width="11" height="12" viewBox="0 0 11 12" fill="none">
            <path d="M5 5V3a2.500 2.500 0 015 0" stroke="#222" />
            <path d="M1 5.500h7v6H1z" fill="#f2d35a" stroke="#444" />
          </svg>
        </div>
        <div className="ml-px w-[87px] h-[30px] rounded-[4px] border border-[#c6c6c6] bg-gradient-to-b from-[#f4f4f4] to-[#e2e2e2] flex items-center justify-between pl-[5px] pr-[7px]">
          <span className="text-[12.500px] font-semibold text-[#444]">•Layer 1</span>
          <Chevron size={10} color="#888" />
        </div>
        <span className="ml-[6px] w-[321px] text-[14px] whitespace-nowrap text-[#4a5053]">
          No objects selected. Click, Shift+click, Alt+scroll ..
        </span>
        <div className="w-px h-full bg-[#c2c2c2]" />
        <div className="w-[62px] pl-[2px] grid grid-cols-[auto_1fr] text-[11.500px] leading-[16px] text-[#555] pt-[2px]">
          <span>X:</span>
          <span className="text-right tracking-[0.6px] text-[12.500px]">74,13</span>
          <span>Y:</span>
          <span className="text-right tracking-[0.6px] text-[12.500px]">162,30</span>
        </div>
        <span className="ml-[9px] w-[13px] text-[11.500px] text-[#666]">Z:</span>
        <Spin value="189%" className="w-[55px]" dim={false} />
      </div>
    </div>
  );
}
